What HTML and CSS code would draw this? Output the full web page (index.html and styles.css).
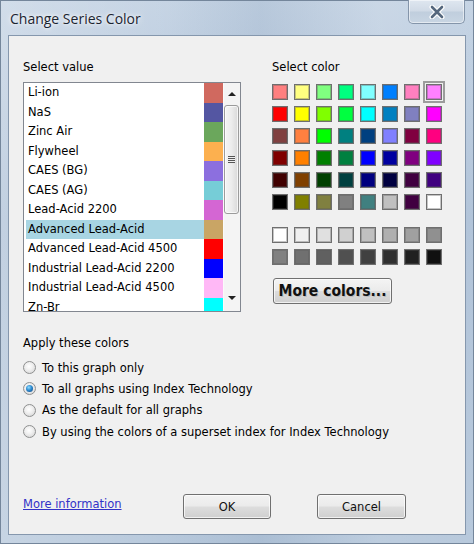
FILE: index.html
```html
<!DOCTYPE html>
<html>
<head>
<meta charset="utf-8">
<link rel="stylesheet" href="styles.css">
</head>
<body>
<div class="window">
  <div class="titlebar">
    <span class="title">Change Series Color</span>
    <div class="close">
      <svg width="18" height="14" viewBox="0 0 18 14">
        <path d="M4 2 L14 12 M14 2 L4 12" stroke="#ffffff" stroke-width="5" stroke-linecap="round"/>
        <path d="M4 2 L14 12 M14 2 L4 12" stroke="#55677d" stroke-width="2.6" stroke-linecap="round"/>
      </svg>
    </div>
  </div>
  <div class="client">
    <div class="top">
      <div class="leftcol">
        <div class="label">Select value</div>
        <div class="listbox">
          <div class="rows">
            <div class="row"><span class="name">Li-ion</span><span class="sw" style="background:#d0695f"></span></div>
            <div class="row"><span class="name">NaS</span><span class="sw" style="background:#5456a2"></span></div>
            <div class="row"><span class="name">Zinc Air</span><span class="sw" style="background:#6ba75c"></span></div>
            <div class="row"><span class="name">Flywheel</span><span class="sw" style="background:#fcb04f"></span></div>
            <div class="row"><span class="name">CAES (BG)</span><span class="sw" style="background:#8c6fdf"></span></div>
            <div class="row"><span class="name">CAES (AG)</span><span class="sw" style="background:#76cdd7"></span></div>
            <div class="row"><span class="name">Lead-Acid 2200</span><span class="sw" style="background:#d466d3"></span></div>
            <div class="row sel"><span class="name">Advanced Lead-Acid</span><span class="sw" style="background:#c9a565"></span></div>
            <div class="row"><span class="name">Advanced Lead-Acid 4500</span><span class="sw" style="background:#ff0000"></span></div>
            <div class="row"><span class="name">Industrial Lead-Acid 2200</span><span class="sw" style="background:#0000ff"></span></div>
            <div class="row"><span class="name">Industrial Lead-Acid 4500</span><span class="sw" style="background:#ffb8f6"></span></div>
            <div class="row"><span class="name">Zn-Br</span><span class="sw" style="background:#00ffff"></span></div>
          </div>
          <div class="scrollbar">
            <div class="sbtn"><span class="arrow-up"></span></div>
            <div class="track">
              <div class="thumb"><span class="grip"></span></div>
            </div>
            <div class="sbtn down"><span class="arrow-down"></span></div>
          </div>
        </div>
      </div>
      <div class="rightcol">
        <div class="label">Select color</div>
        <div class="grid">
          <span class="c" style="background:#ff8080"></span><span class="c" style="background:#ffff80"></span><span class="c" style="background:#80ff80"></span><span class="c" style="background:#00ff80"></span><span class="c" style="background:#80ffff"></span><span class="c" style="background:#0080ff"></span><span class="c" style="background:#ff80c0"></span><span class="c picked" style="background:#ff80ff"></span>
          <span class="c" style="background:#ff0000"></span><span class="c" style="background:#ffff00"></span><span class="c" style="background:#80ff00"></span><span class="c" style="background:#00ff40"></span><span class="c" style="background:#00ffff"></span><span class="c" style="background:#0080c0"></span><span class="c" style="background:#8080c0"></span><span class="c" style="background:#ff00ff"></span>
          <span class="c" style="background:#804040"></span><span class="c" style="background:#ff8040"></span><span class="c" style="background:#00ff00"></span><span class="c" style="background:#008080"></span><span class="c" style="background:#004080"></span><span class="c" style="background:#8080ff"></span><span class="c" style="background:#800040"></span><span class="c" style="background:#ff0080"></span>
          <span class="c" style="background:#800000"></span><span class="c" style="background:#ff8000"></span><span class="c" style="background:#008000"></span><span class="c" style="background:#008040"></span><span class="c" style="background:#0000ff"></span><span class="c" style="background:#0000a0"></span><span class="c" style="background:#800080"></span><span class="c" style="background:#8000ff"></span>
          <span class="c" style="background:#400000"></span><span class="c" style="background:#804000"></span><span class="c" style="background:#004000"></span><span class="c" style="background:#004040"></span><span class="c" style="background:#000080"></span><span class="c" style="background:#000040"></span><span class="c" style="background:#400040"></span><span class="c" style="background:#400080"></span>
          <span class="c" style="background:#000000"></span><span class="c" style="background:#808000"></span><span class="c" style="background:#808040"></span><span class="c" style="background:#808080"></span><span class="c" style="background:#408080"></span><span class="c" style="background:#c0c0c0"></span><span class="c" style="background:#400040"></span><span class="c" style="background:#ffffff"></span>
        </div>
        <div class="grid grays">
          <span class="c" style="background:#ffffff"></span><span class="c" style="background:#f0f0f0"></span><span class="c" style="background:#e0e0e0"></span><span class="c" style="background:#d0d0d0"></span><span class="c" style="background:#c0c0c0"></span><span class="c" style="background:#b0b0b0"></span><span class="c" style="background:#a0a0a0"></span><span class="c" style="background:#909090"></span>
          <span class="c" style="background:#808080"></span><span class="c" style="background:#707070"></span><span class="c" style="background:#606060"></span><span class="c" style="background:#505050"></span><span class="c" style="background:#404040"></span><span class="c" style="background:#303030"></span><span class="c" style="background:#202020"></span><span class="c" style="background:#101010"></span>
        </div>
        <div class="more">More colors...</div>
      </div>
    </div>
    <div class="apply">
      <div class="label">Apply these colors</div>
      <div class="radio-row"><span class="radio"></span><span>To this graph only</span></div>
      <div class="radio-row"><span class="radio on"></span><span>To all graphs using Index Technology</span></div>
      <div class="radio-row"><span class="radio"></span><span>As the default for all graphs</span></div>
      <div class="radio-row"><span class="radio"></span><span>By using the colors of a superset index for Index Technology</span></div>
    </div>
    <div class="bottom">
      <a class="link" href="#">More information</a>
      <div class="btn ok">OK</div>
      <div class="btn cancel">Cancel</div>
    </div>
  </div>
</div>
</body>
</html>
```

FILE: styles.css
```css
html, body {
  margin: 0;
  padding: 0;
}
body {
  width: 474px;
  height: 544px;
  overflow: hidden;
  background: #b6c6d8;
  font-family: "DejaVu Sans", sans-serif;
  font-size: 11.5px;
  color: #000;
}
.window {
  width: 474px;
  height: 544px;
  box-sizing: border-box;
  padding: 0 8px 9px 8px;
  display: flex;
  flex-direction: column;
  background:
    linear-gradient(90deg, rgba(255,255,255,0.25) 0%, rgba(255,255,255,0.05) 35%, rgba(120,145,175,0.15) 55%, rgba(255,255,255,0.12) 80%, rgba(255,255,255,0.05) 100%),
    linear-gradient(180deg, #c3d2e3 0%, #aec1d7 40%, #b4c6da 100%);
  box-shadow: inset 0 0 0 1px #74869b;
}
.titlebar {
  height: 35px;
  display: flex;
  align-items: center;
  padding-left: 2px;
}
.title {
  font-family: "Open Sans", "Noto Sans", sans-serif;
  font-size: 14px;
  color: #1b2430;
  text-shadow: 0 0 6px #ffffff, 0 0 3px rgba(255,255,255,0.8);
  margin-top: 1px;
}
.close {
  margin-left: auto;
  margin-right: 1px;
  align-self: flex-start;
  width: 57px;
  height: 24px;
  box-sizing: border-box;
  border: 1px solid #8495aa;
  border-top: none;
  border-radius: 0 0 5px 5px;
  background: linear-gradient(180deg, #dfe7f0 0%, #d0dae6 48%, #c0cedd 52%, #c8d5e3 100%);
  box-shadow: inset 0 0 0 1px rgba(255,255,255,0.5);
  display: flex;
  align-items: center;
  justify-content: center;
}
.client {
  flex: 1;
  background: #f0f0f0;
  border: 1px solid #8597ad;
  display: flex;
  flex-direction: column;
  padding: 24px 14px 15px 14px;
}
.label {
  height: 15px;
  line-height: 15px;
}
.top {
  display: flex;
  gap: 31px;
}
.leftcol {
  width: 218px;
}
.listbox {
  margin-top: 7px;
  width: 218px;
  height: 230px;
  box-sizing: border-box;
  border: 1px solid #828790;
  background: #ffffff;
  display: flex;
  overflow: hidden;
}
.rows {
  width: 199px;
  display: flex;
  flex-direction: column;
}
.row {
  height: 19.5px;
  flex: none;
  display: flex;
  padding-left: 2px;
}
.name {
  flex: 1;
  padding-left: 2px;
  line-height: 19.5px;
  white-space: nowrap;
  overflow: hidden;
}
.row.sel .name {
  background: #a8d5e3;
}
.sw {
  width: 19px;
  flex: none;
}
.scrollbar {
  flex: 1;
  display: flex;
  flex-direction: column;
  background: #f4f4f4;
  border-left: 1px solid #fafafa;
}
.sbtn {
  height: 22px;
  display: flex;
  align-items: center;
  justify-content: center;
}
.sbtn.down {
  height: 26px;
}
.arrow-up {
  width: 0;
  height: 0;
  border-left: 4px solid transparent;
  border-right: 4px solid transparent;
  border-bottom: 4px solid #222;
}
.arrow-down {
  width: 0;
  height: 0;
  border-left: 4px solid transparent;
  border-right: 4px solid transparent;
  border-top: 4px solid #222;
}
.track {
  flex: 1;
  padding: 0 1px 0 0;
}
.thumb {
  height: 109px;
  box-sizing: border-box;
  border: 1px solid #9b9b9b;
  border-radius: 3px;
  background: linear-gradient(90deg, #f5f5f5 0%, #ececec 50%, #d9d9d9 100%);
  box-shadow: inset 0 0 0 1px rgba(255,255,255,0.7);
  display: flex;
  align-items: center;
  justify-content: center;
}
.grip {
  width: 7px;
  height: 7px;
  background: repeating-linear-gradient(180deg, #555 0px, #555 1px, #eee 1px, #eee 2px);
}
.rightcol {
  display: flex;
  flex-direction: column;
  align-items: flex-start;
}
.grid {
  margin-top: 9px;
  display: grid;
  grid-template-columns: repeat(8, 16px);
  grid-auto-rows: 16px;
  gap: 6px;
}
.grid.grays {
  margin-top: 17px;
}
.c {
  width: 16px;
  height: 16px;
  box-sizing: border-box;
  border: 1px solid #6f6f6f;
  box-shadow: inset 0 0 0 1px rgba(90,90,90,0.35);
}
.c.picked {
  outline: 2px solid #9c9c9c;
  outline-offset: 1px;
}
.more {
  margin-top: 13px;
  margin-left: 1px;
  width: 119px;
  height: 26px;
  box-sizing: border-box;
  border: 1px solid #707070;
  border-radius: 3px;
  background: linear-gradient(180deg, #f4f4f4 0%, #ebebeb 48%, #dcdcdc 52%, #cfcfcf 100%);
  box-shadow: inset 0 0 0 1px rgba(255,255,255,0.7);
  font-family: "DejaVu Sans Condensed", "DejaVu Sans", sans-serif;
  font-weight: bold;
  font-size: 15.5px;
  line-height: 24px;
  text-align: center;
  white-space: nowrap;
  color: #111;
  text-shadow: 1px 1px 0 rgba(0,0,0,0.15);
}
.apply {
  margin-top: 24px;
  display: flex;
  flex-direction: column;
}
.apply .label {
  margin-bottom: 6px;
}
.radio-row {
  height: 21.33px;
  display: flex;
  align-items: center;
  gap: 6px;
  white-space: nowrap;
}
.radio {
  width: 13px;
  height: 13px;
  box-sizing: border-box;
  border-radius: 50%;
  border: 1px solid #8f9090;
  background: radial-gradient(circle at 45% 40%, #ffffff 0%, #f0f0f0 40%, #cfcfcf 100%);
  display: flex;
  align-items: center;
  justify-content: center;
}
.radio.on::after {
  content: "";
  width: 7px;
  height: 7px;
  border-radius: 50%;
  background: radial-gradient(circle at 40% 35%, #8fdcff 0%, #2f8cd0 45%, #0d3f7a 100%);
}
.bottom {
  margin-top: auto;
  display: flex;
  align-items: flex-start;
}
.link {
  width: 160px;
  margin-top: 3px;
  color: #3232c8;
  text-decoration: underline;
  line-height: 15px;
}
.btn {
  height: 25px;
  box-sizing: border-box;
  border: 1px solid #707070;
  border-radius: 3px;
  background: linear-gradient(180deg, #f2f2f2 0%, #ebebeb 48%, #dddddd 52%, #cfcfcf 100%);
  box-shadow: inset 0 0 0 1px rgba(255,255,255,0.7);
  display: flex;
  align-items: center;
  justify-content: center;
  color: #111;
}
.ok {
  width: 88px;
}
.cancel {
  width: 89px;
  margin-left: 46px;
}
```
